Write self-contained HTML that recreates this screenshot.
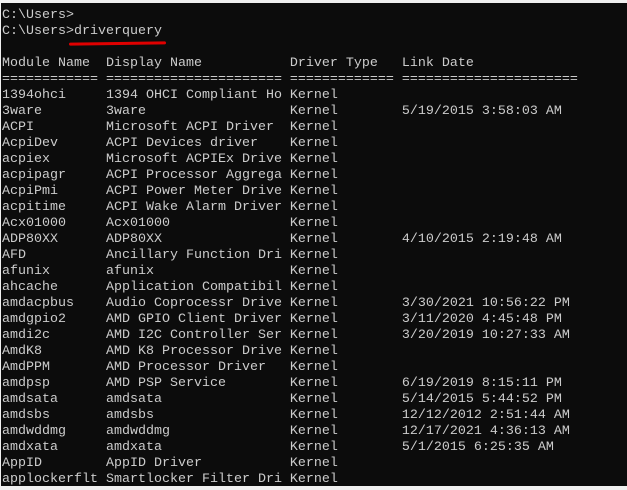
<!DOCTYPE html>
<html><head><style>
html,body{margin:0;padding:0;}
body{width:627px;height:490px;background:#f0f0f0;position:relative;overflow:hidden;}
#con{position:absolute;left:1px;top:3px;width:626px;height:483px;background:#0c0c0c;}
pre{margin:0;position:absolute;left:1px;top:5px;font-family:"Liberation Mono",monospace;font-size:13.33px;line-height:16px;color:#cccccc;white-space:pre;}
#ul{position:absolute;left:68px;top:39px;width:97px;height:3px;background:#e00000;border-radius:2px;transform:rotate(-0.8deg);}
</style></head><body>
<div id="con">
<pre>C:\Users&gt;
C:\Users&gt;driverquery

Module Name  Display Name           Driver Type   Link Date
============ ====================== ============= ======================
1394ohci     1394 OHCI Compliant Ho Kernel
3ware        3ware                  Kernel        5/19/2015 3:58:03 AM
ACPI         Microsoft ACPI Driver  Kernel
AcpiDev      ACPI Devices driver    Kernel
acpiex       Microsoft ACPIEx Drive Kernel
acpipagr     ACPI Processor Aggrega Kernel
AcpiPmi      ACPI Power Meter Drive Kernel
acpitime     ACPI Wake Alarm Driver Kernel
Acx01000     Acx01000               Kernel
ADP80XX      ADP80XX                Kernel        4/10/2015 2:19:48 AM
AFD          Ancillary Function Dri Kernel
afunix       afunix                 Kernel
ahcache      Application Compatibil Kernel
amdacpbus    Audio Coprocessr Drive Kernel        3/30/2021 10:56:22 PM
amdgpio2     AMD GPIO Client Driver Kernel        3/11/2020 4:45:48 PM
amdi2c       AMD I2C Controller Ser Kernel        3/20/2019 10:27:33 AM
AmdK8        AMD K8 Processor Drive Kernel
AmdPPM       AMD Processor Driver   Kernel
amdpsp       AMD PSP Service        Kernel        6/19/2019 8:15:11 PM
amdsata      amdsata                Kernel        5/14/2015 5:44:52 PM
amdsbs       amdsbs                 Kernel        12/12/2012 2:51:44 AM
amdwddmg     amdwddmg               Kernel        12/17/2021 4:36:13 AM
amdxata      amdxata                Kernel        5/1/2015 6:25:35 AM
AppID        AppID Driver           Kernel
applockerflt Smartlocker Filter Dri Kernel</pre>
<div id="ul"></div>
</div>
</body></html>
